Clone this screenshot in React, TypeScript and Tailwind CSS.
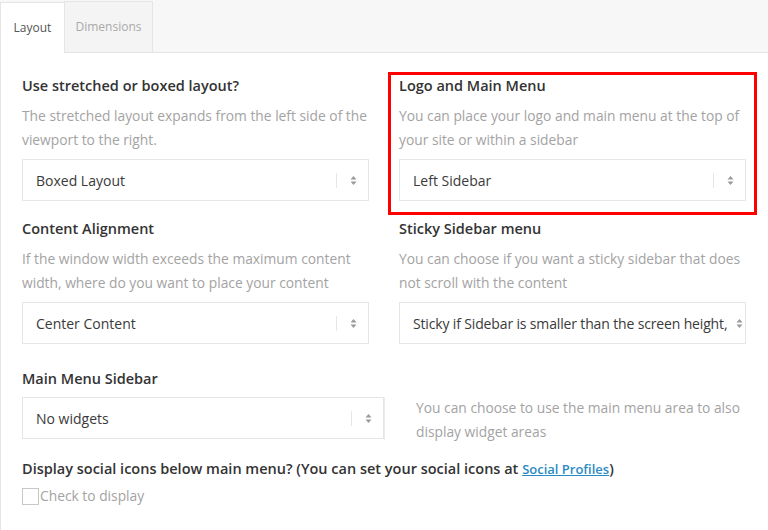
import React from "react";

const font = { fontFamily: '"Open Sans", "Noto Sans", sans-serif' };

function Arrows() {
  return (
    <svg width="7" height="11" viewBox="0 0 7 11" className="block">
      <path d="M3.5 1 L6.5 4.5 L0.5 4.5 Z" fill="#9a9a9a" />
      <path d="M3.5 10 L6.5 6.5 L0.5 6.5 Z" fill="#9a9a9a" />
    </svg>
  );
}

function Select({ value, className = "", tight = false }: { value: string; className?: string; tight?: boolean }) {
  return (
    <div
      className={`relative flex h-[42px] items-center border border-[#e6e6e6] bg-white pl-[13px] text-[14px] text-[#3a3a3a] ${className}`}
    >
      <span className={`flex-1 overflow-hidden whitespace-nowrap ${tight ? "tracking-[-0.15px]" : ""}`}>{value}</span>
      {tight ? null : <span className="mr-[2px] h-[15px] w-px bg-[#e6e6e6]" />}
      <span className={`flex justify-center ${tight ? "w-[11px]" : "w-[29px]"}`}>
        <Arrows />
      </span>
    </div>
  );
}

function Section({
  title,
  desc,
  value,
  tight = false,
}: {
  title: string;
  desc: string;
  value: string;
  tight?: boolean;
}) {
  return (
    <div className="flex flex-col">
      <div className="text-[14.5px] font-semibold leading-[24px] text-[#333]">{title}</div>
      <div className="mt-[6px] text-[13.8px] leading-[24px] text-[#a3a3a3]">{desc}</div>
      <Select value={value} className="mt-[7px]" tight={tight} />
    </div>
  );
}

export default function App() {
  return (
    <div className="h-[530px] w-[768px] overflow-hidden bg-white" style={font}>
      <div className="flex h-[53px] items-end border-b border-[#e5e5e5] bg-[#f7f7f7]">
        <div className="relative -mb-px flex h-[51px] w-[64px] items-center justify-center border-l border-t border-[#e5e5e5] bg-white text-[12px] text-[#555]">
          Layout
        </div>
        <div className="flex h-[51px] w-[89px] items-center justify-center border-l border-r border-t border-[#e5e5e5] bg-[#f4f4f4] text-[12px] text-[#aaa]">
          Dimensions
        </div>
      </div>
      <div className="h-[477px] border-l border-[#e5e5e5] px-[21px] pt-[21px]">
        <div className="grid grid-cols-[347px_347px] gap-x-[30px] gap-y-[16px]">
          <Section
            title="Use stretched or boxed layout?"
            desc="The stretched layout expands from the left side of the viewport to the right."
            value="Boxed Layout"
          />
          <div className="relative">
            <div className="pointer-events-none absolute -bottom-[14px] -left-[11px] -right-[11px] -top-[2px] border-[3px] border-[#ff0000]" />
            <Section
              title="Logo and Main Menu"
              desc="You can place your logo and main menu at the top of your site or within a sidebar"
              value="Left Sidebar"
            />
          </div>
          <Section
            title="Content Alignment"
            desc="If the window width exceeds the maximum content width, where do you want to place your content"
            value="Center Content"
          />
          <Section
            title="Sticky Sidebar menu"
            desc="You can choose if you want a sticky sidebar that does not scroll with the content"
            value="Sticky if Sidebar is smaller than the screen height,"
            tight
          />
        </div>
        <div className="mt-[23px] text-[14.5px] font-semibold leading-[24px] text-[#333]">Main Menu Sidebar</div>
        <div className="mt-[6px] flex h-[42px] items-start">
          <Select value="No widgets" className="w-[362px]" />
          <div className="h-[43px] whitespace-nowrap border-l border-[#ececec] pl-[31px] text-[13.8px] leading-[24px] text-[#a3a3a3]">
            <div className="-mt-[1px]">You can choose to use the main menu area to also</div>
            <div>display widget areas</div>
          </div>
        </div>
        <div className="mt-[18px] text-[14.5px] font-semibold leading-[24px] text-[#333]">
          Display social icons below main menu? (You can set your social icons at{" "}
          <a className="text-[13px] text-[#2a8bc4] underline">Social Profiles</a>)
        </div>
        <label className="mt-[3px] flex items-center text-[13.8px] leading-[24px] text-[#a3a3a3]">
          <span className="mr-[1px] inline-block h-[17px] w-[17px] border border-[#c8c8c8] bg-white" />
          Check to display
        </label>
      </div>
    </div>
  );
}
